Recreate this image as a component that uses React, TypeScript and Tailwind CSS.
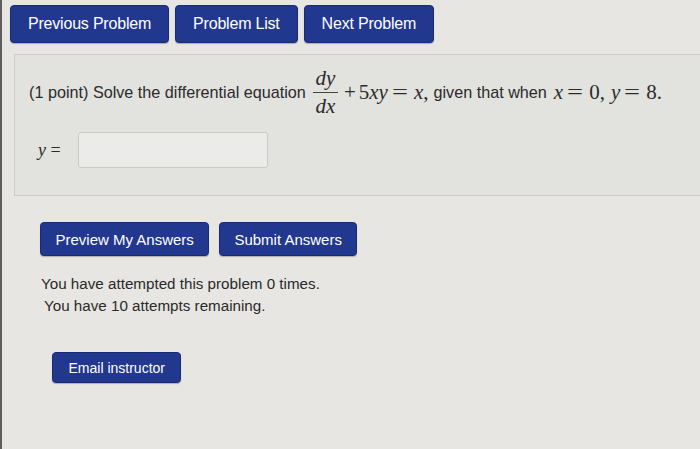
import React from 'react';

const navButtons = ['Previous Problem', 'Problem List', 'Next Problem'];

function BlueButton({ label, className = '' }: { label: string; className?: string }) {
  return (
    <button
      className={`rounded-[4px] border border-[#182b78] bg-[#22388f] text-white leading-none shadow-[0_1px_1px_rgba(0,0,0,0.25)] ${className}`}
    >
      {label}
    </button>
  );
}

function Fraction() {
  return (
    <span className="ml-[7px] mr-[6px] inline-flex flex-col items-center font-['Liberation_Serif',serif] text-[21px] italic leading-none">
      <span className="px-[2px] pb-[3px]">dy</span>
      <span className="h-px w-[25px] bg-[#444]" />
      <span className="px-[2px] pt-[3px]">dx</span>
    </span>
  );
}

// MathJax draws "=" wider than Times does, with thick spacing on both sides
function Eq() {
  return <span className="ml-[4px] mr-[6px] inline-block w-[16px] scale-x-[1.35] text-center">=</span>;
}

export default function App() {
  return (
    <div className="relative h-[449px] w-[700px] overflow-hidden border-l-2 border-[#5e5e5e] bg-[#e7e6e2] font-['Liberation_Sans',Arial,sans-serif] text-[#2b2b2b]">
      {/* top navigation */}
      <div className="flex gap-[6px] pl-[8px] pt-[5px]">
        {navButtons.map(label => (
          <BlueButton key={label} label={label} className="h-[38px] px-[17px] text-[16px] tracking-[-0.2px]" />
        ))}
      </div>

      {/* problem panel */}
      <div className="ml-[12px] mt-[11px] h-[142px] w-[720px] border border-[#cdcdca] bg-[#e2e2df] pl-[14px] pt-[13px]">
        <div className="flex items-center text-[16.2px]">
          <span>(1 point) Solve the differential equation</span>
          <Fraction />
          <span className="font-['Liberation_Serif',serif] text-[21px]">
            <span className="mr-[3px]">+</span>5<i>xy</i>
            <Eq />
            <i>x</i>,
          </span>
          <span className="ml-[5px]">given that when</span>
          <span className="ml-[7px] font-['Liberation_Serif',serif] text-[21px]">
            <i>x</i>
            <Eq />
            0,<i className="ml-[6px]">y</i>
            <Eq />
            8.
          </span>
        </div>

        <div className="mt-[15px] flex items-center">
          <span className="ml-[9px] w-[40px] font-['Liberation_Serif',serif] text-[18px]">
            <i>y</i> =
          </span>
          <input
            type="text"
            className="h-[36px] w-[190px] rounded-[3px] border border-[#c9c9c7] bg-[#ebebe9] outline-none"
          />
        </div>
      </div>

      {/* answer buttons */}
      <div className="ml-[38px] mt-[26px] flex gap-[10px]">
        <BlueButton label="Preview My Answers" className="h-[34px] px-[14.5px] text-[15px]" />
        <BlueButton label="Submit Answers" className="h-[34px] px-[14px] text-[15px]" />
      </div>

      <div className="ml-[39px] mt-[17px] text-[15.2px] leading-[22px] text-[#2a2a2a]">
        <p>You have attempted this problem 0 times.</p>
        <p className="ml-[3px]">You have 10 attempts remaining.</p>
      </div>

      <div className="ml-[50px] mt-[35px]">
        <BlueButton label="Email instructor" className="h-[31px] px-[15.5px] text-[14px]" />
      </div>
    </div>
  );
}
